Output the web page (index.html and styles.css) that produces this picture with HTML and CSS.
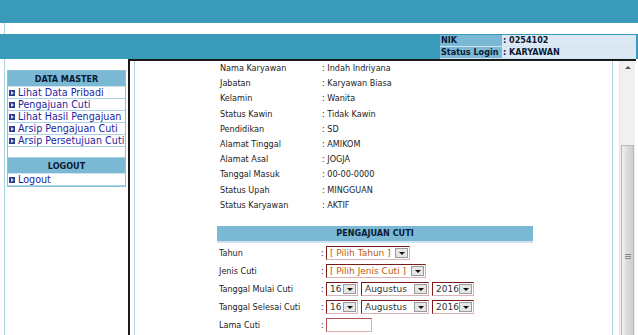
FILE: index.html
```html
<!DOCTYPE html>
<html>
<head>
<meta charset="utf-8">
<link rel="stylesheet" href="styles.css">
</head>
<body>
<div class="top"></div>
<div class="strip"></div>
<div class="bar">
  <table class="login">
    <tr><td class="lk">NIK</td><td class="lv">: 0254102</td></tr>
    <tr><td class="lk">Status Login</td><td class="lv">: KARYAWAN</td></tr>
  </table>
</div>
<div class="main">
  <div class="side">
    <div class="menu">
      <div class="mh">DATA MASTER</div>
      <a class="mi" href="#"><i class="bul"></i>Lihat Data Pribadi</a>
      <a class="mi" href="#"><i class="bul"></i>Pengajuan Cuti</a>
      <a class="mi" href="#"><i class="bul"></i>Lihat Hasil Pengajuan</a>
      <a class="mi" href="#"><i class="bul"></i>Arsip Pengajuan Cuti</a>
      <a class="mi" href="#"><i class="bul"></i>Arsip Persetujuan Cuti</a>
      <div class="mgap"></div>
      <div class="mh">LOGOUT</div>
      <a class="mi" href="#"><i class="bul"></i>Logout</a>
    </div>
  </div>
  <div class="frame">
    <div class="inner">
      <div class="content">
        <div class="info">
          <div class="row"><span class="k">Nama Karyawan</span><span class="v">: Indah Indriyana</span></div>
          <div class="row"><span class="k">Jabatan</span><span class="v">: Karyawan Biasa</span></div>
          <div class="row"><span class="k">Kelamin</span><span class="v">: Wanita</span></div>
          <div class="row"><span class="k">Status Kawin</span><span class="v">: Tidak Kawin</span></div>
          <div class="row"><span class="k">Pendidikan</span><span class="v">: SD</span></div>
          <div class="row"><span class="k">Alamat Tinggal</span><span class="v">: AMIKOM</span></div>
          <div class="row"><span class="k">Alamat Asal</span><span class="v">: JOGJA</span></div>
          <div class="row"><span class="k">Tanggal Masuk</span><span class="v">: 00-00-0000</span></div>
          <div class="row"><span class="k">Status Upah</span><span class="v">: MINGGUAN</span></div>
          <div class="row"><span class="k">Status Karyawan</span><span class="v">: AKTIF</span></div>
        </div>
        <div class="form">
          <div class="fh">PENGAJUAN CUTI</div>
          <div class="frow"><span class="k">Tahun</span><span class="c">:</span>
            <span class="sel orange w84"><span class="st">[ Pilih Tahun ]</span><span class="btn"></span></span></div>
          <div class="frow"><span class="k">Jenis Cuti</span><span class="c">:</span>
            <span class="sel orange w100"><span class="st">[ Pilih Jenis Cuti ]</span><span class="btn"></span></span></div>
          <div class="frow"><span class="k">Tanggal Mulai Cuti</span><span class="c">:</span>
            <span class="sel w32"><span class="st">16</span><span class="btn"></span></span>
            <span class="sel w68"><span class="st">Augustus</span><span class="btn"></span></span>
            <span class="sel w42"><span class="st">2016</span><span class="btn"></span></span></div>
          <div class="frow"><span class="k">Tanggal Selesai Cuti</span><span class="c">:</span>
            <span class="sel w32"><span class="st">16</span><span class="btn"></span></span>
            <span class="sel w68"><span class="st">Augustus</span><span class="btn"></span></span>
            <span class="sel w42"><span class="st">2016</span><span class="btn"></span></span></div>
          <div class="frow"><span class="k">Lama Cuti</span><span class="c">:</span>
            <span class="inp"></span></div>
        </div>
      </div>
      <div class="scroll">
        <div class="up"></div>
        <div class="track"></div>
        <div class="thumb"><span class="grip"></span></div>
      </div>
    </div>
  </div>
</div>
</body>
</html>
```
FILE: styles.css
```css
html, body {
  margin: 0;
  padding: 0;
  background: #fff;
  width: 638px;
  height: 335px;
  overflow: hidden;
  font-family: "DejaVu Sans", Verdana, sans-serif;
}
.top {
  height: 23px;
  background: #3a9aba;
}
.strip {
  height: 11px;
  margin-left: 4px;
  border-left: 1px solid #a9d3e3;
  background: #fff;
}
.bar {
  height: 25px;
  background: #3a9aba;
  display: flex;
  justify-content: flex-end;
  align-items: flex-start;
  padding-right: 2px;
}
.login {
  border-collapse: separate;
  border-spacing: 0;
  margin-top: 1px;
  font-family: "DejaVu Sans Condensed", "DejaVu Sans", sans-serif;
  font-weight: bold;
  font-size: 9px;
  color: #0b1a33;
}
.login td {
  height: 11px;
  padding: 0 1px;
  line-height: 11px;
  border-bottom: 1px solid #cfe3ee;
}
.lk {
  width: 60px;
  background: #7ab8d4;
}
.lv {
  width: 132px;
  background: #dce9f5;
}
.main {
  display: flex;
  margin-left: 4px;
  border-left: 1px solid #a9d3e3;
  height: 276px;
}
.side {
  width: 119px;
  padding: 11px 0 0 2px;
}
.menu {
  width: 117px;
  border: 1px solid #8cc3da;
  background: #fff;
}
.mh {
  height: 15px;
  line-height: 16px;
  background: #7ab8d4;
  text-align: center;
  font-family: "DejaVu Sans Condensed", "DejaVu Sans", sans-serif;
  font-weight: bold;
  font-size: 9px;
  color: #0b1a33;
  border-bottom: 1px solid #cfe3ee;
}
.mi {
  display: flex;
  align-items: center;
  height: 11px;
  font-family: "DejaVu Sans", Verdana, sans-serif;
  font-size: 9.6px;
  color: #1f1f9e;
  text-decoration: none;
  border-bottom: 1px solid #a9d3e3;
  padding-left: 1px;
  line-height: 11px;
  white-space: nowrap;
}
.bul {
  width: 6px;
  height: 6px;
  background: #2b3d8f;
  margin-right: 3px;
  position: relative;
  flex: none;
}
.bul::after {
  content: "";
  position: absolute;
  left: 2px;
  top: 1px;
  border-left: 3px solid #cfe0f0;
  border-top: 2px solid transparent;
  border-bottom: 2px solid transparent;
}
.mgap {
  height: 10px;
  border-bottom: 1px solid #a9d3e3;
}
.frame {
  margin-left: 2px;
  width: 506px;
  border-top: 2px solid #1a1a1a;
  border-left: 2px solid #1a1a1a;
  background: #fff;
}
.inner {
  display: flex;
  height: 100%;
}
.content {
  flex: 1;
  margin-left: 4px;
  border-left: 1px solid #a9d3e3;
  border-right: 1px solid #a9d3e3;
  margin-right: 6px;
  font-family: "DejaVu Sans Condensed", "DejaVu Sans", sans-serif;
  font-size: 9px;
  color: #222;
}
.info {
  padding: 0 0 0 85px;
}
.row {
  display: flex;
  height: 15.2px;
  line-height: 15px;
}
.row .k {
  width: 102px;
}
.form {
  margin: 13px 0 0 82px;
  width: 316px;
}
.fh {
  height: 15px;
  line-height: 15px;
  background: #7ab8d4;
  border-bottom: 2px solid #cfe3ee;
  text-align: center;
  font-weight: bold;
  color: #0b1a33;
  margin-bottom: 1px;
}
.frow {
  display: flex;
  align-items: center;
  height: 18px;
  padding-left: 2px;
}
.frow .k {
  width: 102px;
}
.frow .c {
  width: 5px;
}
.sel {
  display: inline-flex;
  align-items: center;
  height: 12px;
  border: 1px solid #7a1c1c;
  border-right-color: #d9b3b3;
  border-bottom-color: #d9b3b3;
  margin-right: 3px;
  box-sizing: content-box;
  font-family: "DejaVu Sans", Verdana, sans-serif;
  font-size: 9px;
  line-height: 12px;
  color: #333;
  background: #fff;
}
.sel.orange {
  color: #c05a10;
}
.st {
  flex: 1;
  padding-left: 3px;
  white-space: nowrap;
  overflow: hidden;
}
.btn {
  width: 13px;
  height: 10px;
  margin: 1px 1px 1px 0;
  background: #e6e6e6;
  border: 1px solid #9a9a9a;
  box-sizing: border-box;
  position: relative;
  flex: none;
}
.btn::after {
  content: "";
  position: absolute;
  left: 3px;
  top: 3px;
  border-top: 3px solid #111;
  border-left: 3px solid transparent;
  border-right: 3px solid transparent;
}
.w84 { width: 82px; }
.w100 { width: 98px; }
.w32 { width: 30px; }
.w68 { width: 66px; }
.w42 { width: 40px; }
.inp {
  width: 44px;
  height: 12px;
  border: 1px solid #b35050;
  border-right-color: #e0b0b0;
  border-bottom-color: #e0b0b0;
}
.scroll {
  width: 15px;
  margin-right: 1px;
  background: #f0f0f0;
  border-left: 1px solid #e4e4e4;
  display: flex;
  flex-direction: column;
}
.up {
  height: 14px;
  position: relative;
}
.up::after {
  content: "";
  position: absolute;
  left: 5px;
  top: 5px;
  border-bottom: 3px solid #555;
  border-left: 3px solid transparent;
  border-right: 3px solid transparent;
}
.track {
  height: 70px;
}
.thumb {
  flex: 1;
  margin: 0 1px;
  border: 1px solid #b8b8b8;
  border-bottom: none;
  background: linear-gradient(to right, #f2f2f2, #dadada 50%, #cfcfcf);
  position: relative;
}
.grip {
  position: absolute;
  left: 3px;
  top: 108px;
  width: 6px;
  height: 5px;
  background: repeating-linear-gradient(to bottom, #888 0 1px, transparent 1px 2px);
}
```
